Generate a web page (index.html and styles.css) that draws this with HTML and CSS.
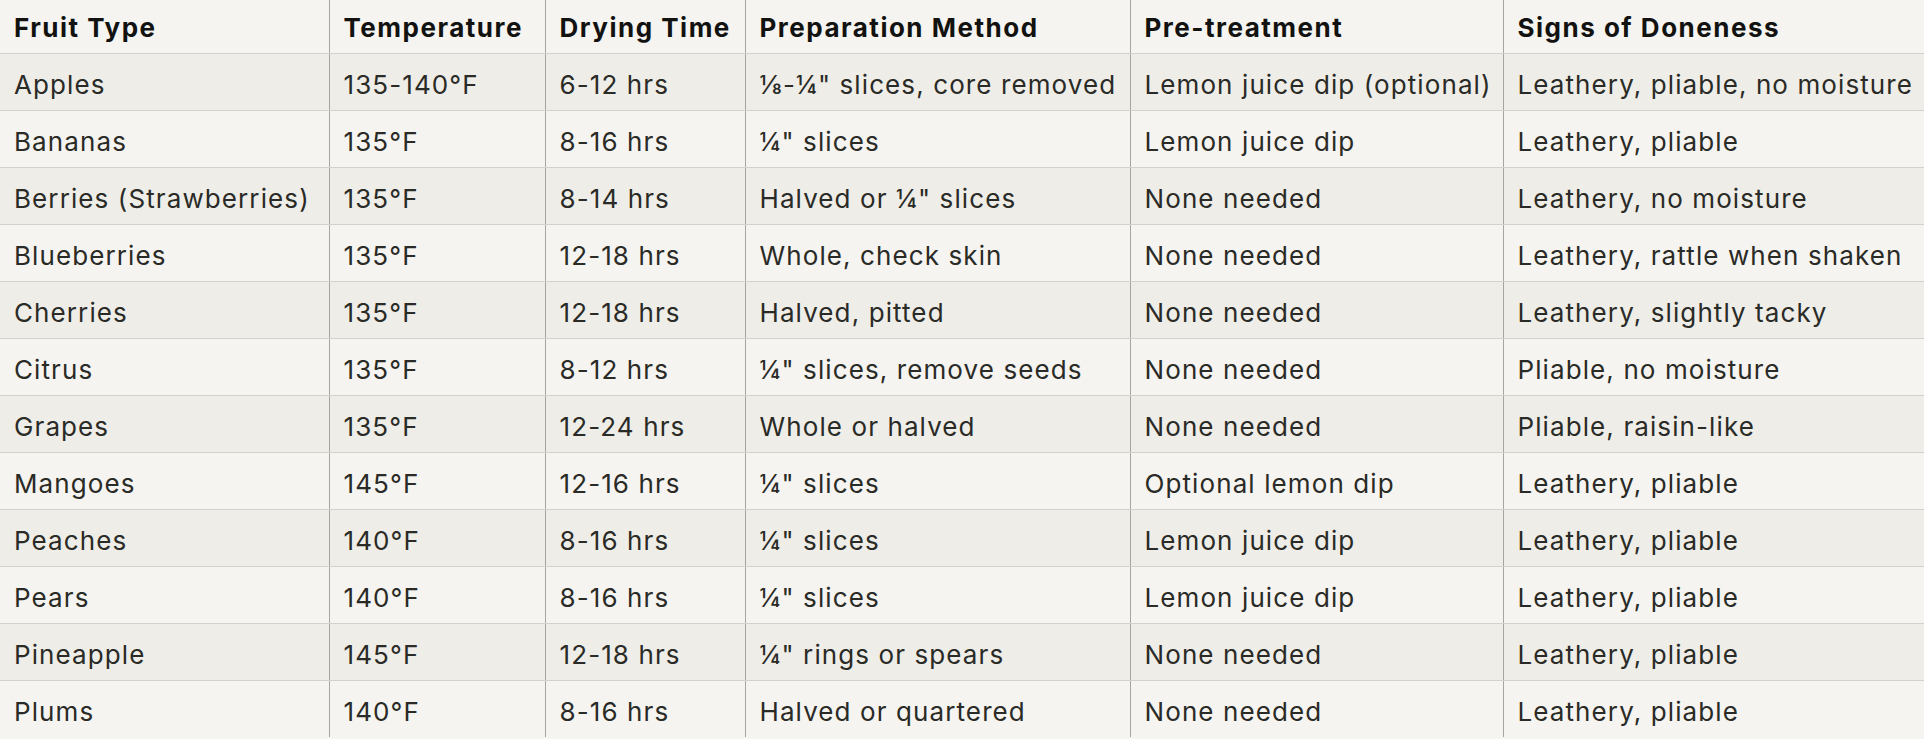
FILE: index.html
```html
<!DOCTYPE html>
<html lang="en">
<head>
<meta charset="utf-8">
<title>Fruit Drying Guide</title>
<link rel="stylesheet" href="styles.css">
</head>
<body>
<table class="guide">
  <colgroup>
    <col class="c1"><col class="c2"><col class="c3"><col class="c4"><col class="c5"><col class="c6">
  </colgroup>
  <thead>
    <tr><th>Fruit Type</th><th>Temperature</th><th>Drying Time</th><th>Preparation Method</th><th>Pre-treatment</th><th>Signs of Doneness</th></tr>
  </thead>
  <tbody>
    <tr><td>Apples</td><td>135-140°F</td><td>6-12 hrs</td><td>⅛-¼" slices, core removed</td><td>Lemon juice dip (optional)</td><td>Leathery, pliable, no moisture</td></tr>
    <tr><td>Bananas</td><td>135°F</td><td>8-16 hrs</td><td>¼" slices</td><td>Lemon juice dip</td><td>Leathery, pliable</td></tr>
    <tr><td>Berries (Strawberries)</td><td>135°F</td><td>8-14 hrs</td><td>Halved or ¼" slices</td><td>None needed</td><td>Leathery, no moisture</td></tr>
    <tr><td>Blueberries</td><td>135°F</td><td>12-18 hrs</td><td>Whole, check skin</td><td>None needed</td><td>Leathery, rattle when shaken</td></tr>
    <tr><td>Cherries</td><td>135°F</td><td>12-18 hrs</td><td>Halved, pitted</td><td>None needed</td><td>Leathery, slightly tacky</td></tr>
    <tr><td>Citrus</td><td>135°F</td><td>8-12 hrs</td><td>¼" slices, remove seeds</td><td>None needed</td><td>Pliable, no moisture</td></tr>
    <tr><td>Grapes</td><td>135°F</td><td>12-24 hrs</td><td>Whole or halved</td><td>None needed</td><td>Pliable, raisin-like</td></tr>
    <tr><td>Mangoes</td><td>145°F</td><td>12-16 hrs</td><td>¼" slices</td><td>Optional lemon dip</td><td>Leathery, pliable</td></tr>
    <tr><td>Peaches</td><td>140°F</td><td>8-16 hrs</td><td>¼" slices</td><td>Lemon juice dip</td><td>Leathery, pliable</td></tr>
    <tr><td>Pears</td><td>140°F</td><td>8-16 hrs</td><td>¼" slices</td><td>Lemon juice dip</td><td>Leathery, pliable</td></tr>
    <tr><td>Pineapple</td><td>145°F</td><td>12-18 hrs</td><td>¼" rings or spears</td><td>None needed</td><td>Leathery, pliable</td></tr>
    <tr><td>Plums</td><td>140°F</td><td>8-16 hrs</td><td>Halved or quartered</td><td>None needed</td><td>Leathery, pliable</td></tr>
  </tbody>
</table>
</body>
</html>
```

FILE: styles.css
```css
html, body {
  margin: 0;
  padding: 0;
  background: #f5f4f0;
}

.guide {
  width: 1924px;
  table-layout: fixed;
  border-collapse: collapse;
  font-family: Inter, "Noto Sans", sans-serif;
  color: #2a2a26;
}

.c1 { width: 329px; }
.c2 { width: 216px; }
.c3 { width: 200px; }
.c4 { width: 385px; }
.c5 { width: 373px; }
.c6 { width: 421px; }

.guide th,
.guide td {
  text-align: left;
  white-space: nowrap;
  overflow: hidden;
  border-left: 1px solid #a6a5a0;
}

.guide th:first-child,
.guide td:first-child {
  border-left: none;
}

.guide th {
  height: 51px;
  padding: 2px 0 0 14px;
  font-size: 26px;
  font-weight: 700;
  letter-spacing: 1.5px;
  color: #121210;
  border-bottom: 1px solid #d2d1cc;
}

.guide td {
  height: 52px;
  padding: 4px 0 0 14px;
  font-size: 26px;
  font-weight: 400;
  letter-spacing: 1.1px;
  border-bottom: 1px solid #d2d1cc;
}

.guide tbody tr:nth-child(odd) {
  background: #eeede8;
}

.guide tbody tr:nth-child(even) {
  background: #f5f4f0;
}

.guide tbody tr:last-child td {
  border-bottom: none;
}
```
